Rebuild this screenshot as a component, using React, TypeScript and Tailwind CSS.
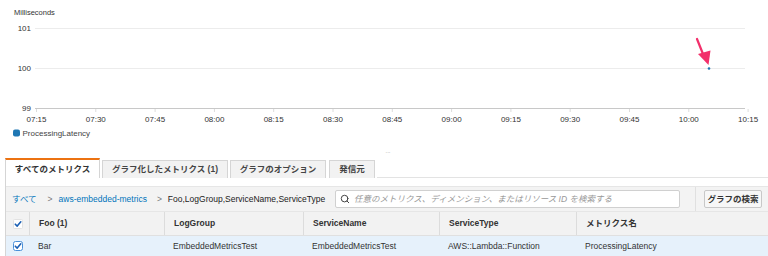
import { Search } from 'lucide-react';

const ticks = ['07:15', '07:30', '07:45', '08:00', '08:15', '08:30', '08:45', '09:00', '09:15', '09:30', '09:45', '10:00', '10:15'];

function Chart() {
  return (
    <svg width={768} height={158} className="block" fontFamily="Liberation Sans, sans-serif">
      <text x={14} y={15} fontSize={7.5} fill="#333">Milliseconds</text>
      <text x={31} y={31} fontSize={8} fill="#333" textAnchor="end">101</text>
      <text x={31} y={71} fontSize={8} fill="#333" textAnchor="end">100</text>
      <text x={31} y={110.5} fontSize={8} fill="#333" textAnchor="end">99</text>
      <line x1={35} x2={745} y1={28.5} y2={28.5} stroke="#ececec" />
      <line x1={35} x2={745} y1={68.5} y2={68.5} stroke="#ececec" />
      <line x1={35} x2={745} y1={108.5} y2={108.5} stroke="#c8c8c8" />
      {ticks.map((t, i) => {
        const x = 36.5 + i * 59.3;
        return (
          <g key={t}>
            <line x1={x} x2={x} y1={109} y2={112} stroke="#dcdcdc" />
            <text x={x} y={122} fontSize={8} fill="#333" textAnchor="middle">{t}</text>
          </g>
        );
      })}
      <circle cx={709} cy={68.5} r={1.3} fill="#1f77b4" />
      {/* annotation arrow */}
      <line x1={697} y1={39} x2={703} y2={54} stroke="#f2306b" strokeWidth={2.2} strokeLinecap="round" />
      <polygon points="698,54 710.5,50.5 708.5,65" fill="#f2306b" />
      <rect x={13} y={129.5} width={7} height={7} rx={2} fill="#1f77b4" />
      <text x={22.5} y={135.5} fontSize={8} fill="#444">ProcessingLatency</text>
      <text x={388} y={153} fontSize={6} fill="#999" textAnchor="middle">...</text>
    </svg>
  );
}

function Check({ boxed }: { boxed?: boolean }) {
  return (
    <svg width={10} height={10} viewBox="0 0 10 10">
      {boxed ? (
        <rect x={0.5} y={0.5} width={9} height={9} rx={2} fill="white" stroke="#4a90d9" />
      ) : (
        <rect x={0.5} y={0.5} width={9} height={9} rx={1} fill="white" stroke="#e2e2e2" />
      )}
      <path d="M2.3 5.2 L4.2 7.1 L7.8 2.8" fill="none" stroke="#1a5fb4" strokeWidth={1.6} strokeLinecap="round" strokeLinejoin="round" />
    </svg>
  );
}

export default function App() {
  const cols = [
    { label: 'Foo (1)', value: 'Bar', w: 'w-[135px]' },
    { label: 'LogGroup', value: 'EmbeddedMetricsTest', w: 'w-[139px]' },
    { label: 'ServiceName', value: 'EmbeddedMetricsTest', w: 'w-[136px]' },
    { label: 'ServiceType', value: 'AWS::Lambda::Function', w: 'w-[137px]' },
    { label: 'メトリクス名', value: 'ProcessingLatency', w: 'flex-1' },
  ];

  return (
    <div className="w-[768px] h-[256px] overflow-hidden bg-white font-[Liberation_Sans,Noto_Sans_CJK_JP,sans-serif] text-[#333]">
      <Chart />

      {/* tabs */}
      <div className="flex items-end h-[20px] pl-[5px] gap-[2px] text-[8.5px] font-bold whitespace-nowrap">
        <div className="w-[95px] h-[20px] flex items-center justify-center bg-white border-t-2 border-t-[#ec7211] border-x border-x-[#d5d5d5]">
          すべてのメトリクス
        </div>
        <div className="w-[126px] h-[18px] flex items-center justify-center bg-[#f2f2f2] border border-b-0 border-[#d5d5d5] text-[#444]">
          グラフ化したメトリクス (1)
        </div>
        <div className="w-[96px] h-[18px] flex items-center justify-center bg-[#f2f2f2] border border-b-0 border-[#d5d5d5] text-[#444]">
          グラフのオプション
        </div>
        <div className="ml-[1px] w-[46px] h-[18px] flex items-center justify-center bg-[#f2f2f2] border border-b-0 border-[#d5d5d5] text-[#444]">
          発信元
        </div>
        <div className="flex-1 self-stretch border-b border-[#e3e3e3]" />
      </div>

      {/* panel */}
      <div className="ml-[5px] border-l border-[#d5d5d5] pt-[8px]">
        <div className="h-[26px] flex items-center bg-[#f3f3f3] border-y border-[#e6e6e6] text-[8.5px] whitespace-nowrap">
          <div className="w-[324px] shrink-0 flex items-center overflow-hidden">
            <span className="ml-[6px] text-[#0073bb]">すべて</span>
            <span className="ml-[11px] text-[#777]">&gt;</span>
            <span className="ml-[6px] text-[#0073bb]">aws-embedded-metrics</span>
            <span className="ml-[10px] text-[#777]">&gt;</span>
            <span className="ml-[6px] text-[#222]">Foo,LogGroup,ServiceName,ServiceType</span>
          </div>
          <div className="shrink-0 ml-[5px] w-[345px] h-[18px] flex items-center bg-white border border-[#d0d0d0] rounded-[2px]">
            <Search size={10} strokeWidth={2.4} className="ml-[4px] text-[#444]" />
            <span className="ml-[4px] italic text-[#999]">任意のメトリクス、ディメンション、またはリソース ID を検索する</span>
          </div>
          <div className="shrink-0 ml-[15px] self-stretch border-l border-[#e0e0e0]" />
          <div className="shrink-0 ml-[8px] w-[58px] h-[18px] flex items-center justify-center bg-[#f7f7f7] border border-[#c8c8c8] rounded-[2px] font-bold text-[#333]">
            グラフの検索
          </div>
        </div>

        <div className="h-[24px] flex bg-[#f2f2f2] border-b border-[#e0e0e0] text-[8.5px] font-bold whitespace-nowrap">
          <div className="w-[23px] flex items-center justify-center">
            <Check />
          </div>
          {cols.map((c) => (
            <div key={c.label} className={`${c.w} flex items-center pl-[9px] border-l border-[#dcdcdc]`}>
              {c.label}
            </div>
          ))}
        </div>

        <div className="h-[20px] flex bg-[#e6f1fb] text-[8.5px] text-[#333] whitespace-nowrap">
          <div className="w-[23px] flex items-center justify-center">
            <Check boxed />
          </div>
          {cols.map((c) => (
            <div key={c.label} className={`${c.w} flex items-center pl-[9px]`}>
              {c.value}
            </div>
          ))}
        </div>
      </div>
    </div>
  );
}
